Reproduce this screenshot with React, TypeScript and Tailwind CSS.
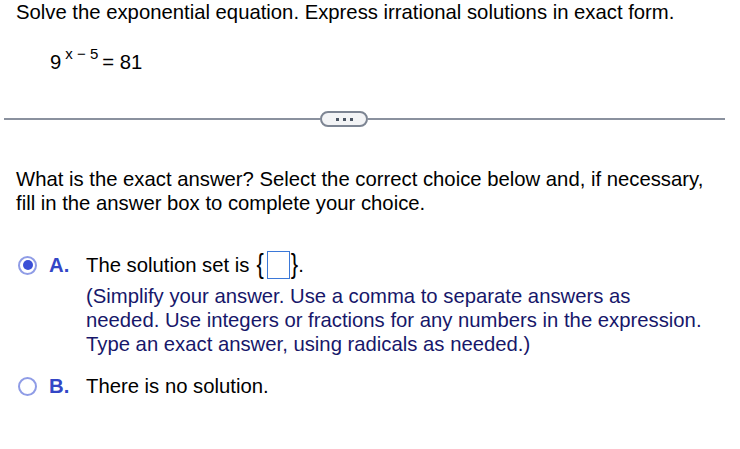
export default function App() {
  return (
    <div className="w-[740px] h-[449px] bg-white text-black font-['Liberation_Sans',Arial,sans-serif] text-[20.3px] leading-[24px] overflow-hidden">
      <div className="pl-[16px] h-[24px]">Solve the exponential equation. Express irrational solutions in exact form.</div>

      <div className="pl-[50px] mt-[26px] h-[24px] flex items-baseline">
        <span>9</span>
        <span className="text-[15px] relative -top-[10px] ml-[4px] mr-[4px]">x − 5</span>
        <span>= 81</span>
      </div>

      <div className="mt-[37px] pl-[4px] pr-[15px] h-[16px] flex items-center">
        <div className="w-[316px] h-[2px] bg-[#8a919e]" />
        <div className="w-[48px] h-[16px] rounded-full border-2 border-[#7d8593] bg-[#f3f4f6] flex items-center justify-center gap-[4px]">
          <span className="w-[3px] h-[3px] bg-[#4b5563]" />
          <span className="w-[3px] h-[3px] bg-[#4b5563]" />
          <span className="w-[3px] h-[3px] bg-[#4b5563]" />
        </div>
        <div className="flex-1 h-[2px] bg-[#8a919e]" />
      </div>

      <div className="pl-[16px] mt-[40px] w-[712px]">
        What is the exact answer? Select the correct choice below and, if necessary, fill in the answer box to complete your choice.
      </div>

      <div className="mt-[34px] pl-[18px] flex">
        <div className="h-[32px] flex items-center">
          <div className="w-[19px] h-[19px] rounded-full border-2 border-[#8f9ce6] flex items-center justify-center">
            <div className="w-[10px] h-[10px] rounded-full bg-[#3b4fd6]" />
          </div>
        </div>
        <div className="h-[32px] flex items-center w-[49px] pl-[12px] font-bold text-[#3346c6]">A.</div>
        <div>
          <div className="flex items-center h-[32px]">
            <span>The solution set is</span>
            <span className="ml-[7px] mr-[3px] text-[22px] leading-none scale-y-125 -mt-[2px]">{"{"}</span>
            <span className="w-[23px] h-[28px] border-[1.5px] border-[#3b78d8] bg-white" />
            <span className="ml-[1px] text-[22px] leading-none scale-y-125 -mt-[2px]">{"}"}</span>
            <span>.</span>
          </div>
          <div className="text-[#17176a] mt-[3px]">
            (Simplify your answer. Use a comma to separate answers as
            <br />
            needed. Use integers or fractions for any numbers in the expression.
            <br />
            Type an exact answer, using radicals as needed.)
          </div>
        </div>
      </div>

      <div className="mt-[18px] pl-[18px] flex items-center h-[24px]">
        <div className="w-[19px] h-[19px] rounded-full border-2 border-[#8f9ce6]" />
        <div className="w-[49px] pl-[12px] font-bold text-[#3346c6]">B.</div>
        <div>There is no solution.</div>
      </div>
    </div>
  );
}
